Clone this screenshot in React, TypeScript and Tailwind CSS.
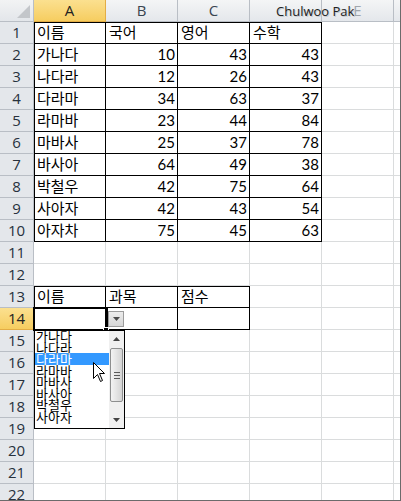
import React from "react";

const COLS = ["A", "B", "C", "D", "E"];

// cell text per row: [A, B, C, D]
const DATA: Record<number, (string | number)[]> = {
  1: ["이름", "국어", "영어", "수학"],
  2: ["가나다", 10, 43, 43],
  3: ["나다라", 12, 26, 43],
  4: ["다라마", 34, 63, 37],
  5: ["라마바", 23, 44, 84],
  6: ["마바사", 25, 37, 78],
  7: ["바사아", 64, 49, 38],
  8: ["박철우", 42, 75, 64],
  9: ["사아자", 42, 43, 54],
  10: ["아자차", 75, 45, 63],
  13: ["이름", "과목", "점수"],
};

const LIST = ["가나다", "나다라", "다라마", "라마바", "마바사", "바사아", "박철우", "사아자"];

const kr = "font-['Malgun_Gothic','Noto_Sans_CJK_KR',sans-serif]";

function inRange(r: number, c: number) {
  if (r >= 1 && r <= 10 && c <= 3) return true;
  if (r >= 13 && r <= 14 && c <= 2) return true;
  return false;
}

function Cell({ r, c }: { r: number; c: number }) {
  const v = DATA[r]?.[c];
  const boxed = inRange(r, c);
  const topEdge = boxed && (r === 1 || r === 13);
  const leftEdge = boxed && c === 0;
  const shadow =
    topEdge && leftEdge
      ? "shadow-[inset_1px_1px_0_#000]"
      : topEdge
      ? "shadow-[inset_0_1px_0_#000]"
      : leftEdge
      ? "shadow-[inset_1px_0_0_#000]"
      : "";
  const isNum = typeof v === "number";
  return (
    <div
      className={`w-[72px] h-full shrink-0 border-r border-b flex items-center ${
        boxed ? "border-black" : "border-[#dadcdd]"
      } ${shadow} ${isNum ? "justify-end pr-[2px] font-['Lato',sans-serif] text-[15px]" : `pl-[3px] ${kr} text-[15px]`} text-black`}
    >
      {v !== undefined ? v : null}
    </div>
  );
}

function RowHeader({ r }: { r: number }) {
  const active = r === 14;
  return (
    <div
      className={`w-[34px] h-full shrink-0 border-r border-b flex items-center justify-center font-['Open_Sans',sans-serif] text-[15px] ${
        active
          ? "bg-gradient-to-b from-[#fbe08f] to-[#f6cd5f] border-[#e3ad45] text-[#222]"
          : "bg-[#e4e7eb] border-[#b9bec5] text-[#27313d]"
      }`}
    >
      {r}
    </div>
  );
}

function Scrollbar() {
  return (
    <div className="w-[15px] h-full bg-[#f0f0f0] flex flex-col items-center">
      <div className="h-[16px] flex items-center justify-center">
        <svg width="7" height="4" viewBox="0 0 7 4">
          <path d="M0 4 L3.5 0 L7 4 Z" fill="#444" />
        </svg>
      </div>
      <div className="mt-[1px] w-[13px] h-[54px] rounded-[2px] border border-[#8e8f8f] bg-gradient-to-r from-[#f3f3f3] via-[#e4e4e4] to-[#d4d4d4] flex flex-col items-center justify-center gap-[2px]">
        <div className="w-[6px] h-px bg-[#5a5a5a]" />
        <div className="w-[6px] h-px bg-[#5a5a5a]" />
        <div className="w-[6px] h-px bg-[#5a5a5a]" />
      </div>
      <div className="flex-1" />
      <div className="h-[16px] flex items-center justify-center">
        <svg width="7" height="4" viewBox="0 0 7 4">
          <path d="M0 0 L3.5 4 L7 0 Z" fill="#444" />
        </svg>
      </div>
    </div>
  );
}

export default function App() {
  const rows = Array.from({ length: 22 }, (_, i) => i + 1);
  return (
    <div className="relative w-[401px] h-[501px] overflow-hidden bg-white border-r border-b border-[#6b6b6b]">
      {/* column headers */}
      <div className="flex h-[22px]">
        <div className="relative w-[34px] h-full shrink-0 bg-gradient-to-b from-[#f2f3f4] to-[#e3e6ea] border-r border-b border-[#b9bec5]">
          <svg className="absolute right-[3px] bottom-[3px]" width="13" height="13" viewBox="0 0 13 13">
            <path d="M13 0 L13 13 L0 13 Z" fill="#c3c6ca" />
          </svg>
        </div>
        {COLS.map((c, i) => (
          <div
            key={c}
            className={`w-[72px] h-full shrink-0 border-r border-b flex items-center justify-center font-['Open_Sans',sans-serif] text-[15px] ${
              i === 0
                ? "bg-gradient-to-b from-[#fbe08f] to-[#f6cd5f] border-[#e3ad45] text-[#222]"
                : "bg-gradient-to-b from-[#f4f5f6] to-[#e4e7eb] border-[#b9bec5] text-[#3a4450]"
            } ${c === "E" ? "text-[#a0a6ad]" : ""}`}
          >
            {c === "D" ? "" : c}
          </div>
        ))}
        <div className="flex-1 h-full bg-gradient-to-b from-[#f4f5f6] to-[#e4e7eb] border-b border-[#b9bec5]" />
      </div>

      {/* body rows */}
      {rows.map((r) => (
        <div key={r} className="flex h-[22px]">
          <RowHeader r={r} />
          {COLS.map((_, c) => (
            <Cell key={c} r={r} c={c} />
          ))}
          <div className="flex-1 h-full border-b border-[#dadcdd]" />
        </div>
      ))}

      {/* watermark over header */}
      <div className="absolute left-[276px] top-[3px] font-['Open_Sans',sans-serif] text-[13px] text-[#222] [text-shadow:1px_1px_0_#c8cdd3] leading-[16px]">
        Chulwoo Pak
      </div>

      {/* active cell A14 */}
      <div className="absolute left-[33px] top-[307px] w-[75px] h-[24px] border-2 border-black" />
      <div className="absolute left-[103px] top-[327px] w-[6px] h-[6px] bg-black border border-white" />

      {/* dropdown arrow button */}
      <div className="absolute left-[108px] top-[311px] w-[16px] h-[16px] border border-[#9c9c9c] bg-gradient-to-b from-[#ececec] to-[#d6d6d6] flex items-center justify-center">
        <svg width="7" height="4" viewBox="0 0 7 4">
          <path d="M0 0 L3.5 4 L7 0 Z" fill="#4a4a4a" />
        </svg>
      </div>

      {/* validation list */}
      <div className="absolute left-[34px] top-[330px] w-[91px] h-[99px] border border-black bg-white flex">
        <div className="flex-1 overflow-hidden">
          <div className="-mt-[1px]">
            {LIST.map((item) => (
              <div
                key={item}
                className={`h-[11.5px] leading-[11.5px] pl-[1px] ${kr} text-[13px] ${
                  item === "다라마" ? "bg-[#3399ff] text-white" : "text-black"
                }`}
              >
                {item}
              </div>
            ))}
          </div>
        </div>
        <Scrollbar />
      </div>

      {/* mouse pointer */}
      <svg className="absolute left-[93px] top-[362px]" width="13" height="21" viewBox="0 0 13 21">
        <path
          d="M0.5 0.5 L0.5 16.5 L4.5 12.5 L7.5 19.5 L9.5 18.5 L6.5 11.5 L11.5 11.5 Z"
          fill="#fff"
          stroke="#000"
          strokeWidth="1"
          strokeLinejoin="miter"
        />
      </svg>
    </div>
  );
}
